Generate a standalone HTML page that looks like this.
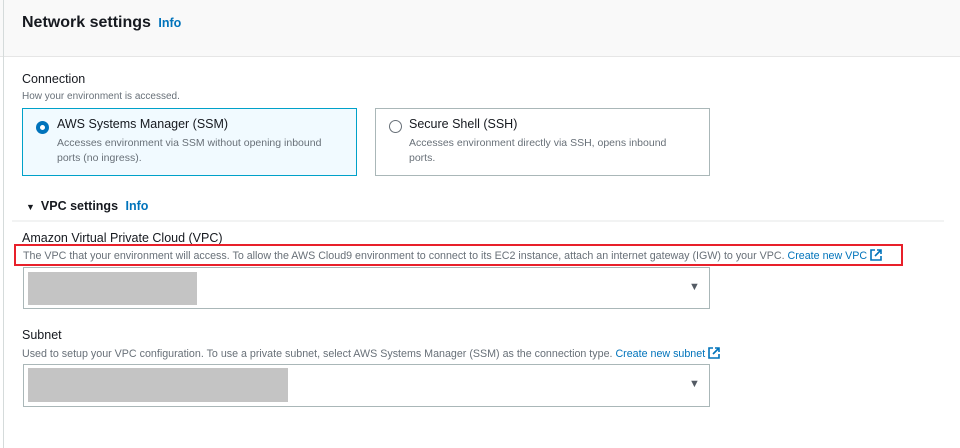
<!DOCTYPE html>
<html><head><style>
*{margin:0;padding:0;box-sizing:border-box}
body{width:960px;height:448px;overflow:hidden;background:#fff;font-family:"Liberation Sans",sans-serif;position:relative;color:#16191f}
.a{position:absolute;white-space:nowrap}
.info{color:#0073bb;font-weight:bold}
.sm{font-size:10px;color:#687078}
.lnk{color:#0073bb}
.ext{display:inline-block;vertical-align:-2px;margin-left:3px}
</style></head><body>
<div class="a" style="left:0;top:0;width:960px;height:57px;background:#f9f9f9;border-bottom:1px solid #e6e6e6"></div>
<div class="a" style="left:3px;top:0;width:1px;height:448px;background:#d5dbdb"></div>
<div class="a" style="left:22px;top:14px;font-size:16px;font-weight:bold;color:#16191f">Network settings <span class="info" style="font-size:12.5px;margin-left:3px">Info</span></div>

<div class="a" style="left:22px;top:72px;font-size:12.5px">Connection</div>
<div class="a sm" style="left:22px;top:91px">How your environment is accessed.</div>

<div class="a" style="left:22px;top:108px;width:335px;height:68px;background:#f1faff;border:1px solid #00a1c9"></div>
<div class="a" style="left:36px;top:121px;width:13px;height:13px;border-radius:50%;border:4px solid #0073bb;background:#fff"></div>
<div class="a" style="left:57px;top:117px;font-size:12.5px">AWS Systems Manager (SSM)</div>
<div class="a sm" style="left:57px;top:136px;line-height:15px;font-size:10.5px">Accesses environment via SSM without opening inbound<br>ports (no ingress).</div>

<div class="a" style="left:375px;top:108px;width:335px;height:68px;border:1px solid #aab7b8"></div>
<div class="a" style="left:389px;top:120px;width:13px;height:13px;border-radius:50%;border:1px solid #687078;background:#fff"></div>
<div class="a" style="left:409px;top:117px;font-size:12.5px">Secure Shell (SSH)</div>
<div class="a sm" style="left:409px;top:136px;line-height:15px;font-size:10.5px">Accesses environment directly via SSH, opens inbound<br>ports.</div>

<div class="a" style="left:26px;top:199px;font-size:12.5px;font-weight:bold"><span style="font-size:9px;margin-right:6px">▼</span>VPC settings <span class="info" style="margin-left:4px">Info</span></div>
<div class="a" style="left:12px;top:220px;width:932px;height:2px;background:#f2f3f3"></div>

<div class="a" style="left:22px;top:231px;font-size:12.5px;color:#16191f">Amazon Virtual Private Cloud (VPC)</div>
<div class="a" style="left:14px;top:244px;width:889px;height:22px;border:2px solid #e8202a"></div>
<div class="a sm" style="left:23px;top:249px;font-size:10.7px">The VPC that your environment will access. To allow the AWS Cloud9 environment to connect to its EC2 instance, attach an internet gateway (IGW) to your VPC. <span class="lnk">Create new VPC</span><svg class="ext" width="12" height="12" viewBox="0 0 12 12"><path d="M5 1H1v10h10V7M7 1h4v4M11 1L5 7" fill="none" stroke="#0073bb" stroke-width="1.6"/></svg></div>

<div class="a" style="left:23px;top:267px;width:687px;height:42px;border:1px solid #aab7b8"></div>
<div class="a" style="left:28px;top:272px;width:169px;height:33px;background:#c4c4c4"></div>
<div class="a" style="left:689px;top:281px;font-size:11px;color:#545b64">▼</div>

<div class="a" style="left:22px;top:328px;font-size:12.5px">Subnet</div>
<div class="a sm" style="left:22px;top:347px;font-size:10.7px">Used to setup your VPC configuration. To use a private subnet, select AWS Systems Manager (SSM) as the connection type. <span class="lnk">Create new subnet</span><svg class="ext" width="12" height="12" viewBox="0 0 12 12"><path d="M5 1H1v10h10V7M7 1h4v4M11 1L5 7" fill="none" stroke="#0073bb" stroke-width="1.6"/></svg></div>

<div class="a" style="left:23px;top:364px;width:687px;height:43px;border:1px solid #aab7b8"></div>
<div class="a" style="left:28px;top:368px;width:260px;height:34px;background:#c4c4c4"></div>
<div class="a" style="left:689px;top:378px;font-size:11px;color:#545b64">▼</div>
</body></html>
